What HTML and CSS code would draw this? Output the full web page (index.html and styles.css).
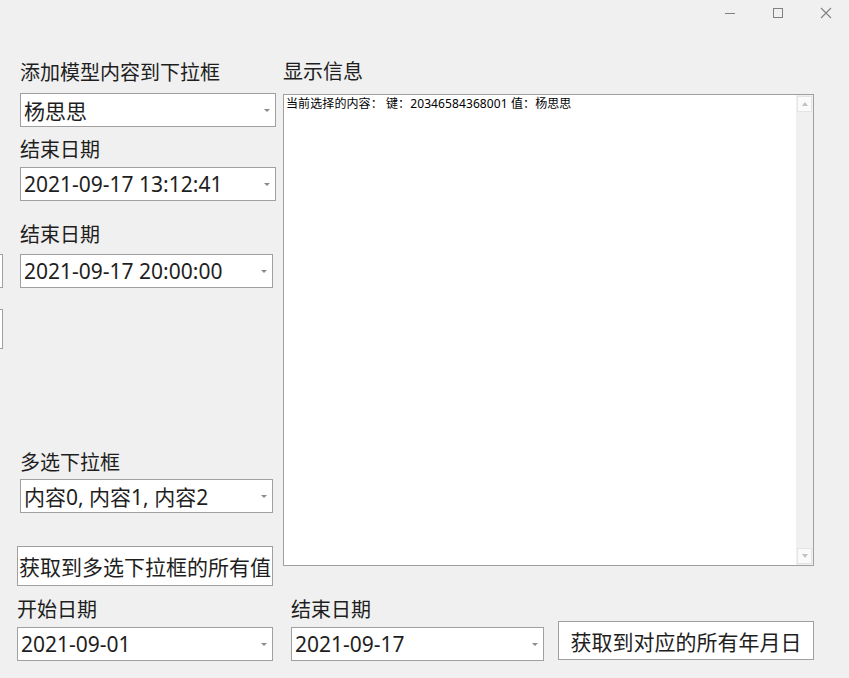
FILE: index.html
```html
<!DOCTYPE html>
<html lang="zh-CN">
<head>
  <meta charset="UTF-8">
  <title>Form1</title>
  <link rel="stylesheet" href="styles.css">
</head>
<body>
  <div class="window">
    <!-- Title bar buttons -->
    <div class="titlebar">
      <span class="win-btn">
        <svg width="48" height="26" viewBox="0 0 48 26"><line x1="20" y1="13.5" x2="30" y2="13.5" stroke="#808080" stroke-width="1"/></svg>
      </span>
      <span class="win-btn">
        <svg width="48" height="26" viewBox="0 0 48 26"><rect x="20.5" y="8.5" width="9" height="9" fill="none" stroke="#808080" stroke-width="1"/></svg>
      </span>
      <span class="win-btn">
        <svg width="48" height="26" viewBox="0 0 48 26"><path d="M20 8 L30 18 M30 8 L20 18" stroke="#808080" stroke-width="1.1" fill="none"/></svg>
      </span>
    </div>

    <!-- Main area -->
    <div class="content">
      <div class="stubs">
        <div class="stub stub-a"></div>
        <div class="stub stub-b"></div>
      </div>

      <div class="left-col">
        <label class="caption cap-model">添加模型内容到下拉框</label>
        <div class="combo wide gap-8"><span>杨思思</span><i class="arrow"></i></div>

        <label class="caption gap-9">结束日期</label>
        <div class="combo wide gap-5"><span>2021-09-17 13:12:41</span><i class="arrow"></i></div>

        <label class="caption gap-20">结束日期</label>
        <div class="combo gap-7"><span>2021-09-17 20:00:00</span><i class="arrow"></i></div>

        <label class="caption cap-multi">多选下拉框</label>
        <div class="combo gap-4"><span>内容0, 内容1, 内容2</span><i class="arrow"></i></div>

        <button class="btn btn-multi">获取到多选下拉框的所有值</button>
      </div>

      <div class="right-col">
        <label class="caption cap-info">显示信息</label>
        <div class="textbox">
          <div class="textbox-text">当前选择的内容： 键：20346584368001 值：杨思思</div>
          <div class="vscroll">
            <span class="sb-btn"><i class="sb-up"></i></span>
            <span class="sb-btn"><i class="sb-down"></i></span>
          </div>
        </div>
      </div>
    </div>

    <!-- Date range row -->
    <div class="bottom-row">
      <div class="field field-start">
        <label class="caption">开始日期</label>
        <div class="combo gap-5"><span>2021-09-01</span><i class="arrow"></i></div>
      </div>
      <div class="field field-end">
        <label class="caption">结束日期</label>
        <div class="combo gap-5"><span>2021-09-17</span><i class="arrow"></i></div>
      </div>
      <button class="btn btn-dates">获取到对应的所有年月日</button>
    </div>
  </div>
</body>
</html>
```

FILE: styles.css
```css
/* General reset */
* {
  margin: 0;
  padding: 0;
  box-sizing: border-box;
}

body {
  background-color: #f0f0f0;
  font-family: "Noto Sans", "Noto Sans CJK SC", sans-serif;
  color: #1e1e1e;
}

.window {
  width: 849px;
  height: 678px;
  overflow: hidden;
}

/* Title bar */
.titlebar {
  height: 26px;
  display: flex;
  justify-content: flex-end;
}

.win-btn {
  width: 48px;
  height: 26px;
  flex-shrink: 0;
}

.win-btn svg {
  display: block;
}

/* Main area */
.content {
  height: 560px;
  display: flex;
}

.stubs {
  width: 17px;
  display: flex;
  flex-direction: column;
}

.stub {
  width: 3px;
  background: #fff;
  border: 1px solid #a0a0a0;
  border-left: none;
}

.stub-a {
  margin-top: 228px;
  height: 34px;
}

.stub-b {
  margin-top: 21px;
  height: 40px;
}

.left-col {
  width: 259px;
  display: flex;
  flex-direction: column;
}

.right-col {
  margin-left: 7px;
  width: 531px;
  display: flex;
  flex-direction: column;
}

/* Labels */
.caption {
  display: block;
  font-family: "Noto Sans CJK SC", sans-serif;
  font-size: 20px;
  line-height: 26px;
  height: 26px;
  white-space: nowrap;
}

.left-col .caption {
  margin-left: 3px;
}

.cap-model { margin-top: 33px; }
.cap-multi { margin-top: 161px; }
.cap-info { margin-top: 32px; }

.gap-4 { margin-top: 4px; }
.gap-5 { margin-top: 5px; }
.gap-7 { margin-top: 7px; }
.gap-8 { margin-top: 8px; }
.gap-9 { margin-top: 9px; }
.gap-20 { margin-top: 20px; }

/* Combo boxes */
.combo {
  height: 34px;
  width: 253px;
  background: #fff;
  border: 1px solid #a0a0a0;
  display: flex;
  align-items: center;
  justify-content: space-between;
  padding: 0 5px 0 3px;
  font-size: 21px;
  white-space: nowrap;
}

.left-col .combo {
  margin-left: 3px;
}

.combo.wide {
  width: 256px;
}

.arrow {
  width: 0;
  height: 0;
  border-left: 3px solid transparent;
  border-right: 3px solid transparent;
  border-top: 3px solid #8a8a8a;
}

/* Buttons */
.btn {
  background: #fff;
  border: 1px solid #a0a0a0;
  font-family: "Noto Sans CJK SC", sans-serif;
  font-size: 21px;
  color: #1e1e1e;
  white-space: nowrap;
  text-align: center;
  padding: 0;
}

.btn-multi {
  margin-top: 33px;
  width: 256px;
  height: 40px;
}

/* Text box */
.textbox {
  margin-top: 10px;
  height: 472px;
  background: #fff;
  border: 1px solid #a0a0a0;
  display: flex;
}

.textbox-text {
  flex: 1;
  padding: 1px 2px;
  font-family: "Noto Sans", "Noto Sans CJK SC", sans-serif;
  font-size: 12px;
  line-height: 15px;
  letter-spacing: 0.1px;
  white-space: pre;
  color: #000;
}

.vscroll {
  width: 17px;
  background: #f0f0f0;
  display: flex;
  flex-direction: column;
  justify-content: space-between;
  padding: 1px 0 1px 1px;
}

.sb-btn {
  width: 15px;
  height: 16px;
  background: #fafafa;
  border: 1px solid #e4e4e4;
  display: flex;
  align-items: center;
  justify-content: center;
}

.sb-up {
  border-left: 3px solid transparent;
  border-right: 3px solid transparent;
  border-bottom: 4px solid #c2c2c2;
}

.sb-down {
  border-left: 3px solid transparent;
  border-right: 3px solid transparent;
  border-top: 4px solid #c2c2c2;
}

/* Bottom row */
.bottom-row {
  display: flex;
  align-items: flex-start;
  padding: 10px 0 0 17px;
}

.field-start .combo {
  width: 256px;
}

.field-end {
  margin-left: 18px;
}

.btn-dates {
  margin-left: 14px;
  margin-top: 25px;
  width: 256px;
  height: 39px;
}
```
